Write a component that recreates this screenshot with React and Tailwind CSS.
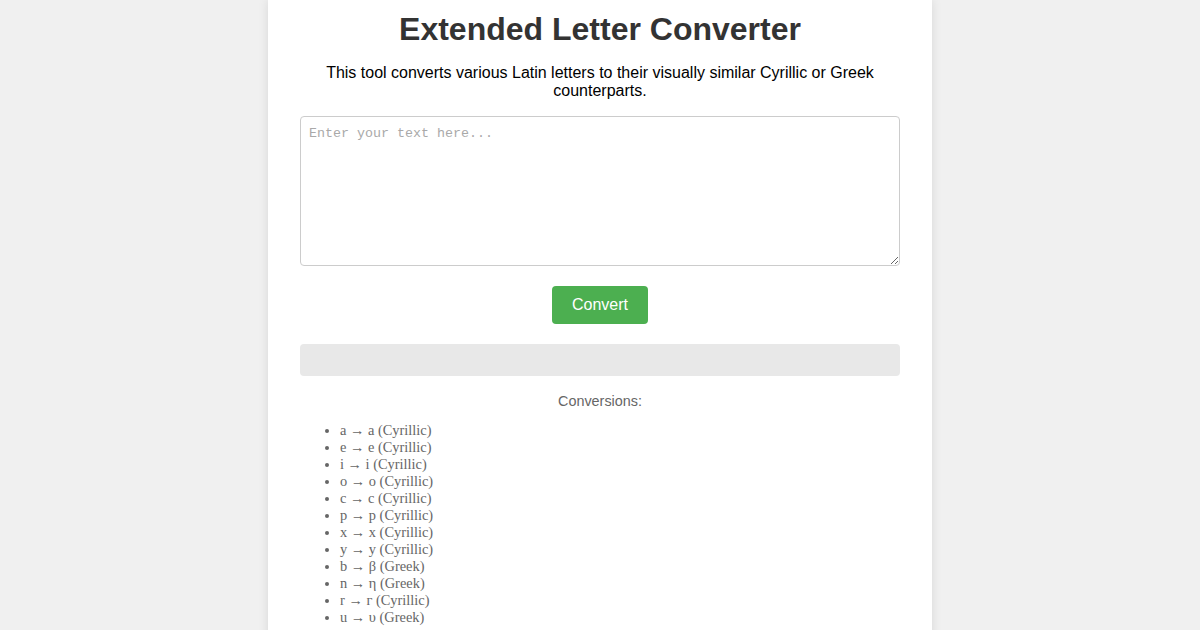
import React, { useState } from "react";

const CONVERSIONS = [
  ["a", "а", "Cyrillic"],
  ["e", "е", "Cyrillic"],
  ["i", "і", "Cyrillic"],
  ["o", "о", "Cyrillic"],
  ["c", "с", "Cyrillic"],
  ["p", "р", "Cyrillic"],
  ["x", "х", "Cyrillic"],
  ["y", "у", "Cyrillic"],
  ["b", "β", "Greek"],
  ["n", "η", "Greek"],
  ["r", "г", "Cyrillic"],
  ["u", "υ", "Greek"],
];

export default function App() {
  const [text, setText] = useState("");
  const [output, setOutput] = useState("");

  const convert = () => {
    const map = Object.fromEntries(CONVERSIONS.map(([from, to]) => [from, to]));
    setOutput(
      text
        .split("")
        .map((ch) => map[ch] ?? ch)
        .join("")
    );
  };

  return (
    <div className="min-h-screen bg-[#f0f0f0] flex justify-center font-['Liberation_Sans',Arial,sans-serif]">
      <div className="w-[664px] bg-white px-8 pt-[11px] pb-8 shadow-[0_0_10px_rgba(0,0,0,0.1)]">
        <h1 className="text-center text-[32px] leading-[36px] font-bold text-[#333]">
          Extended Letter Converter
        </h1>
        <p className="mt-[17px] text-center text-[16px] leading-[18.4px] text-black">
          This tool converts various Latin letters to their visually similar Cyrillic or Greek counterparts.
        </p>
        <textarea
          value={text}
          onChange={(e) => setText(e.target.value)}
          placeholder="Enter your text here..."
          className="mt-[15px] block w-full h-[150px] border border-[#ccc] rounded-[4px] px-2 pt-[9px] pb-2 font-['Liberation_Mono',monospace] text-[13.33px] leading-[15px] placeholder:text-[#a9a9a9] outline-none resize-y"
        />
        <div className="mt-5 flex justify-center">
          <button
            onClick={convert}
            className="bg-[#4CAF50] text-white text-[16px] leading-[18px] px-5 py-[10px] rounded-[4px] cursor-pointer"
          >
            Convert
          </button>
        </div>
        <div className="mt-5 min-h-[32px] bg-[#e8e8e8] rounded-[4px] px-4 py-[7px] text-[16px] break-words">
          {output}
        </div>
        <p className="mt-[17px] text-center text-[14.4px] leading-[17px] text-[#666]">Conversions:</p>
        <ul className="mt-[12px] pl-10 list-disc text-[14.4px] leading-[17px] text-[#666] font-['Liberation_Serif','Times_New_Roman',serif]">
          {CONVERSIONS.map(([from, to, script]) => (
            <li key={from}>
              {from} → {to} ({script})
            </li>
          ))}
        </ul>
      </div>
    </div>
  );
}
